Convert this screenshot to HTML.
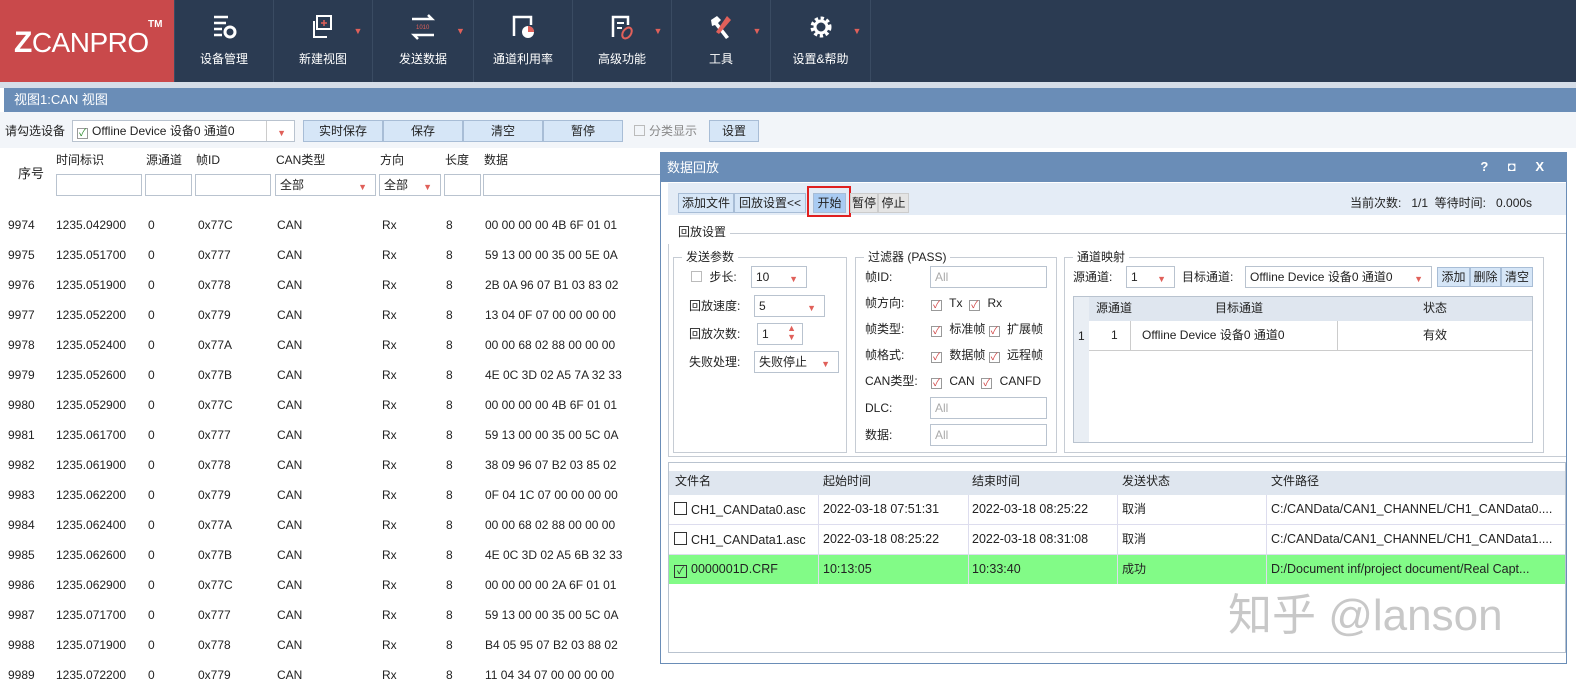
<!DOCTYPE html><html><head><meta charset="utf-8"><style>
*{box-sizing:border-box;margin:0;padding:0}
body{width:1576px;height:684px;overflow:hidden;background:#fff;font-family:"Liberation Sans","Noto Sans CJK SC",sans-serif;font-size:12px;line-height:15px;color:#222;position:relative}
.a{position:absolute;white-space:nowrap}
.nb{position:absolute;top:0;height:82px;border-left:1px solid #3a4b62;text-align:center;color:#fff}
.nb span{position:absolute;left:0;right:0;top:52px}
.ic{position:absolute;top:14px;left:50%;margin-left:-14px;width:28px;height:26px}
.tri{color:#e0605a;font-size:9px}
.inp{position:absolute;background:#fff;border:1px solid #b9c3cf;height:22px;padding:3px 4px;line-height:15px;white-space:nowrap}
.btn{position:absolute;background:#d6e6f7;border:1px solid #a8bdd6;text-align:center;height:22px;line-height:20px}
.row{position:absolute;left:0;width:660px;height:30px}
.row div{position:absolute;top:8px}
.cb{display:inline-block;width:11px;height:11px;border:1px solid #999;vertical-align:-1px;margin-right:4px;font-size:10px;line-height:9px;color:#d04040;text-align:center}
.grp{position:absolute;border:1px solid #c6ccd4}
.gt{position:absolute;background:#fff;padding:0 4px;top:-8px;left:8px}
</style></head><body>
<div class="a" style="left:0;top:0;width:174px;height:82px;background:#c9494b"></div>
<div class="a" style="left:14px;top:26px;color:#fff;font-size:28px;line-height:34px;letter-spacing:-0.5px"><b style="font-size:30px">Z</b>CANPRO</div>
<div class="a" style="left:148px;top:17px;color:#fff;font-size:10px;font-weight:bold">TM</div>
<div class="a" style="left:174px;top:0;width:1402px;height:82px;background:#2b3b52"></div>
<div class="nb" style="left:174px;width:99px"><svg class="ic" viewBox="0 0 28 26"><g stroke="#fff" stroke-width="2.5"><line x1="4" y1="3" x2="18" y2="3"/><line x1="4" y1="9" x2="16" y2="9"/><line x1="4" y1="15" x2="12" y2="15"/><line x1="4" y1="21" x2="12" y2="21"/></g><circle cx="20" cy="18" r="5" fill="none" stroke="#fff" stroke-width="3"/></svg><span>设备管理</span></div>
<div class="nb" style="left:273px;width:99px"><svg class="ic" viewBox="0 0 28 26"><rect x="8" y="2" width="14" height="13" fill="none" stroke="#fff" stroke-width="2"/><path d="M5 7v16h13" fill="none" stroke="#fff" stroke-width="2"/><path d="M15 6v6M12 9h6" stroke="#e0605a" stroke-width="1.5"/></svg><span class="tri" style="position:absolute;left:70px;top:24px">▼</span><span>新建视图</span></div>
<div class="nb" style="left:372px;width:101px"><svg class="ic" viewBox="0 0 28 26"><path d="M3 5h20l-4-4M25 21H5l4 4" fill="none" stroke="#fff" stroke-width="2.5"/><text x="7" y="15" font-size="6" fill="#e0605a">1010</text></svg><span class="tri" style="position:absolute;left:75px;top:24px">▼</span><span>发送数据</span></div>
<div class="nb" style="left:473px;width:99px"><svg class="ic" viewBox="0 0 28 26"><path d="M5 22V3h17v8" fill="none" stroke="#fff" stroke-width="2.5"/><circle cx="19" cy="18" r="6" fill="#fff"/><path d="M19 18V12a6 6 0 0 1 6 6z" fill="#e0605a"/></svg><span>通道利用率</span></div>
<div class="nb" style="left:572px;width:99px"><svg class="ic" viewBox="0 0 28 26"><path d="M5 23V3h15v8" fill="none" stroke="#fff" stroke-width="2.5"/><path d="M9 9h7M9 14h5" stroke="#fff" stroke-width="2"/><ellipse cx="19" cy="19" rx="4" ry="6" fill="none" stroke="#e0605a" stroke-width="2" transform="rotate(35 19 19)"/></svg><span class="tri" style="position:absolute;left:72px;top:24px">▼</span><span>高级功能</span></div>
<div class="nb" style="left:671px;width:99px"><svg class="ic" viewBox="0 0 28 26"><path d="M4 6l6-4 4 4-3 3 11 14-3 2L8 11 5 12z" fill="#fff"/><path d="M20 2l4 4-12 14-3-2z" fill="#e0605a"/></svg><span class="tri" style="position:absolute;left:72px;top:24px">▼</span><span>工具</span></div>
<div class="nb" style="left:770px;width:101px;border-right:1px solid #3a4b62"><svg class="ic" viewBox="0 0 28 26"><circle cx="14" cy="13" r="8" fill="none" stroke="#fff" stroke-width="5" stroke-dasharray="3 2.3"/><circle cx="14" cy="13" r="6" fill="none" stroke="#fff" stroke-width="3"/></svg><span class="tri" style="position:absolute;left:73px;top:24px">▼</span><span>设置&amp;帮助</span></div>
<div class="a" style="left:0;top:82px;width:1576px;height:6px;background:#d5dde8"></div>
<div class="a" style="left:4px;top:88px;width:1572px;height:24px;background:#6a8db7;color:#fff;font-size:13px;padding:4px 10px">视图1:CAN 视图</div>
<div class="a" style="left:0;top:112px;width:1576px;height:36px;background:#f2f5f9"></div>
<div class="a" style="left:5px;top:124px">请勾选设备</div>
<div class="inp" style="left:72px;top:120px;width:223px;height:22px"><span class="cb" style="color:#2a8a2a">✓</span>Offline Device 设备0 通道0<span class="tri" style="position:absolute;right:8px;top:5px">▼</span></div>
<div class="a" style="left:266px;top:121px;width:1px;height:20px;background:#ccc"></div>
<div class="btn" style="left:303px;top:120px;width:80px">实时保存</div>
<div class="btn" style="left:383px;top:120px;width:80px">保存</div>
<div class="btn" style="left:463px;top:120px;width:80px">清空</div>
<div class="btn" style="left:543px;top:120px;width:80px">暂停</div>
<div class="a" style="left:634px;top:124px;color:#888"><span class="cb" style="border-color:#bbb"></span>分类显示</div>
<div class="btn" style="left:709px;top:120px;width:50px">设置</div>
<div class="a" style="left:18px;top:166px;font-size:13px">序号</div>
<div class="a" style="left:56px;top:153px">时间标识</div>
<div class="a" style="left:146px;top:153px">源通道</div>
<div class="a" style="left:196px;top:153px">帧ID</div>
<div class="a" style="left:276px;top:153px">CAN类型</div>
<div class="a" style="left:380px;top:153px">方向</div>
<div class="a" style="left:445px;top:153px">长度</div>
<div class="a" style="left:484px;top:153px">数据</div>
<div class="inp" style="left:56px;top:174px;width:86px"></div>
<div class="inp" style="left:145px;top:174px;width:47px"></div>
<div class="inp" style="left:195px;top:174px;width:76px"></div>
<div class="inp" style="left:275px;top:174px;width:101px">全部<span class="tri" style="position:absolute;right:8px;top:5px">▼</span></div>
<div class="inp" style="left:379px;top:174px;width:62px">全部<span class="tri" style="position:absolute;right:8px;top:5px">▼</span></div>
<div class="inp" style="left:444px;top:174px;width:37px"></div>
<div class="inp" style="left:483px;top:174px;width:180px"></div>
<div style="position:absolute;left:0;top:0;font-size:12px">
<div class="row" style="top:210px"><div style="left:8px">9974</div><div style="left:56px">1235.042900</div><div style="left:148px">0</div><div style="left:198px">0x77C</div><div style="left:277px">CAN</div><div style="left:382px">Rx</div><div style="left:446px">8</div><div style="left:485px">00 00 00 00 4B 6F 01 01</div></div>
<div class="row" style="top:240px"><div style="left:8px">9975</div><div style="left:56px">1235.051700</div><div style="left:148px">0</div><div style="left:198px">0x777</div><div style="left:277px">CAN</div><div style="left:382px">Rx</div><div style="left:446px">8</div><div style="left:485px">59 13 00 00 35 00 5E 0A</div></div>
<div class="row" style="top:270px"><div style="left:8px">9976</div><div style="left:56px">1235.051900</div><div style="left:148px">0</div><div style="left:198px">0x778</div><div style="left:277px">CAN</div><div style="left:382px">Rx</div><div style="left:446px">8</div><div style="left:485px">2B 0A 96 07 B1 03 83 02</div></div>
<div class="row" style="top:300px"><div style="left:8px">9977</div><div style="left:56px">1235.052200</div><div style="left:148px">0</div><div style="left:198px">0x779</div><div style="left:277px">CAN</div><div style="left:382px">Rx</div><div style="left:446px">8</div><div style="left:485px">13 04 0F 07 00 00 00 00</div></div>
<div class="row" style="top:330px"><div style="left:8px">9978</div><div style="left:56px">1235.052400</div><div style="left:148px">0</div><div style="left:198px">0x77A</div><div style="left:277px">CAN</div><div style="left:382px">Rx</div><div style="left:446px">8</div><div style="left:485px">00 00 68 02 88 00 00 00</div></div>
<div class="row" style="top:360px"><div style="left:8px">9979</div><div style="left:56px">1235.052600</div><div style="left:148px">0</div><div style="left:198px">0x77B</div><div style="left:277px">CAN</div><div style="left:382px">Rx</div><div style="left:446px">8</div><div style="left:485px">4E 0C 3D 02 A5 7A 32 33</div></div>
<div class="row" style="top:390px"><div style="left:8px">9980</div><div style="left:56px">1235.052900</div><div style="left:148px">0</div><div style="left:198px">0x77C</div><div style="left:277px">CAN</div><div style="left:382px">Rx</div><div style="left:446px">8</div><div style="left:485px">00 00 00 00 4B 6F 01 01</div></div>
<div class="row" style="top:420px"><div style="left:8px">9981</div><div style="left:56px">1235.061700</div><div style="left:148px">0</div><div style="left:198px">0x777</div><div style="left:277px">CAN</div><div style="left:382px">Rx</div><div style="left:446px">8</div><div style="left:485px">59 13 00 00 35 00 5C 0A</div></div>
<div class="row" style="top:450px"><div style="left:8px">9982</div><div style="left:56px">1235.061900</div><div style="left:148px">0</div><div style="left:198px">0x778</div><div style="left:277px">CAN</div><div style="left:382px">Rx</div><div style="left:446px">8</div><div style="left:485px">38 09 96 07 B2 03 85 02</div></div>
<div class="row" style="top:480px"><div style="left:8px">9983</div><div style="left:56px">1235.062200</div><div style="left:148px">0</div><div style="left:198px">0x779</div><div style="left:277px">CAN</div><div style="left:382px">Rx</div><div style="left:446px">8</div><div style="left:485px">0F 04 1C 07 00 00 00 00</div></div>
<div class="row" style="top:510px"><div style="left:8px">9984</div><div style="left:56px">1235.062400</div><div style="left:148px">0</div><div style="left:198px">0x77A</div><div style="left:277px">CAN</div><div style="left:382px">Rx</div><div style="left:446px">8</div><div style="left:485px">00 00 68 02 88 00 00 00</div></div>
<div class="row" style="top:540px"><div style="left:8px">9985</div><div style="left:56px">1235.062600</div><div style="left:148px">0</div><div style="left:198px">0x77B</div><div style="left:277px">CAN</div><div style="left:382px">Rx</div><div style="left:446px">8</div><div style="left:485px">4E 0C 3D 02 A5 6B 32 33</div></div>
<div class="row" style="top:570px"><div style="left:8px">9986</div><div style="left:56px">1235.062900</div><div style="left:148px">0</div><div style="left:198px">0x77C</div><div style="left:277px">CAN</div><div style="left:382px">Rx</div><div style="left:446px">8</div><div style="left:485px">00 00 00 00 2A 6F 01 01</div></div>
<div class="row" style="top:600px"><div style="left:8px">9987</div><div style="left:56px">1235.071700</div><div style="left:148px">0</div><div style="left:198px">0x777</div><div style="left:277px">CAN</div><div style="left:382px">Rx</div><div style="left:446px">8</div><div style="left:485px">59 13 00 00 35 00 5C 0A</div></div>
<div class="row" style="top:630px"><div style="left:8px">9988</div><div style="left:56px">1235.071900</div><div style="left:148px">0</div><div style="left:198px">0x778</div><div style="left:277px">CAN</div><div style="left:382px">Rx</div><div style="left:446px">8</div><div style="left:485px">B4 05 95 07 B2 03 88 02</div></div>
<div class="row" style="top:660px"><div style="left:8px">9989</div><div style="left:56px">1235.072200</div><div style="left:148px">0</div><div style="left:198px">0x779</div><div style="left:277px">CAN</div><div style="left:382px">Rx</div><div style="left:446px">8</div><div style="left:485px">11 04 34 07 00 00 00 00</div></div>
</div>
<div class="a" style="left:660px;top:152px;width:907px;height:512px;background:#fff;border:1px solid #6a8db7"></div>
<div class="a" style="left:661px;top:153px;width:905px;height:29px;background:#6a8db7;color:#fff;font-size:13px;padding:7px 6px">数据回放<span style="position:absolute;right:14px;top:6px;font-weight:bold;letter-spacing:8px">? ◘ X</span></div>
<div class="a" style="left:668px;top:183px;width:898px;height:32px;background:#e4ecf6"></div>
<div class="btn" style="left:678px;top:193px;width:56px;height:20px;line-height:18px">添加文件</div>
<div class="btn" style="left:734px;top:193px;width:72px;height:20px;line-height:18px">回放设置&lt;&lt;</div>
<div class="btn" style="left:813px;top:193px;width:33px;height:20px;line-height:18px;background:#a9cbf2">开始</div>
<div class="a" style="left:807px;top:186px;width:44px;height:31px;border:2px solid #e02020"></div>
<div class="btn" style="left:850px;top:193px;width:28px;height:20px;line-height:18px;background:#e4e4e4;border-color:#ccc">暂停</div>
<div class="btn" style="left:878px;top:193px;width:31px;height:20px;line-height:18px;background:#e4e4e4;border-color:#ccc">停止</div>
<div class="a" style="left:1350px;top:196px">当前次数:&nbsp;&nbsp;&nbsp;1/1&nbsp;&nbsp;等待时间:&nbsp;&nbsp;&nbsp;0.000s</div>
<div class="a" style="left:678px;top:225px">回放设置</div>
<div class="a" style="left:730px;top:233px;width:836px;height:1px;background:#c6ccd4"></div>
<div class="a" style="left:668px;top:244px;width:1px;height:213px;background:#c6ccd4"></div>
<div class="a" style="left:668px;top:456px;width:898px;height:1px;background:#c6ccd4"></div>
<div class="grp" style="left:673px;top:257px;width:174px;height:196px"><div class="gt">发送参数</div></div>
<div class="a" style="left:691px;top:270px"><span class="cb" style="border-color:#bbb"></span> 步长:</div>
<div class="inp" style="left:751px;top:266px;width:56px">10<span class="tri" style="position:absolute;right:8px;top:5px">▼</span></div>
<div class="a" style="left:689px;top:299px">回放速度:</div>
<div class="inp" style="left:754px;top:295px;width:71px">5<span class="tri" style="position:absolute;right:8px;top:5px">▼</span></div>
<div class="a" style="left:689px;top:327px">回放次数:</div>
<div class="inp" style="left:757px;top:323px;width:46px">1<span class="tri" style="position:absolute;right:6px;top:0px;line-height:9px">▲<br>▼</span></div>
<div class="a" style="left:689px;top:355px">失败处理:</div>
<div class="inp" style="left:754px;top:351px;width:85px">失败停止<span class="tri" style="position:absolute;right:8px;top:5px">▼</span></div>
<div class="grp" style="left:855px;top:257px;width:202px;height:196px"><div class="gt">过滤器 (PASS)</div></div>
<div class="a" style="left:865px;top:270px">帧ID:</div><div class="inp" style="left:930px;top:266px;width:117px;color:#aaa">All</div>
<div class="a" style="left:865px;top:296px">帧方向:</div><div class="a" style="left:931px;top:296px"><span class="cb">✓</span> Tx&nbsp;&nbsp;<span class="cb">✓</span> Rx</div>
<div class="a" style="left:865px;top:322px">帧类型:</div><div class="a" style="left:931px;top:322px"><span class="cb">✓</span> 标准帧 <span class="cb">✓</span> 扩展帧</div>
<div class="a" style="left:865px;top:348px">帧格式:</div><div class="a" style="left:931px;top:348px"><span class="cb">✓</span> 数据帧 <span class="cb">✓</span> 远程帧</div>
<div class="a" style="left:865px;top:374px">CAN类型:</div><div class="a" style="left:931px;top:374px"><span class="cb">✓</span> CAN&nbsp;&nbsp;<span class="cb">✓</span> CANFD</div>
<div class="a" style="left:865px;top:401px">DLC:</div><div class="inp" style="left:930px;top:397px;width:117px;color:#aaa">All</div>
<div class="a" style="left:865px;top:428px">数据:</div><div class="inp" style="left:930px;top:424px;width:117px;color:#aaa">All</div>
<div class="grp" style="left:1064px;top:257px;width:480px;height:196px"><div class="gt">通道映射</div></div>
<div class="a" style="left:1073px;top:270px">源通道:</div>
<div class="inp" style="left:1126px;top:266px;width:49px">1<span class="tri" style="position:absolute;right:8px;top:5px">▼</span></div>
<div class="a" style="left:1182px;top:270px">目标通道:</div>
<div class="inp" style="left:1245px;top:266px;width:187px">Offline Device 设备0 通道0<span class="tri" style="position:absolute;right:8px;top:5px">▼</span></div>
<div class="btn" style="left:1437px;top:267px;width:33px;height:20px;line-height:18px">添加</div>
<div class="btn" style="left:1470px;top:267px;width:31px;height:20px;line-height:18px">删除</div>
<div class="btn" style="left:1501px;top:267px;width:32px;height:20px;line-height:18px">清空</div>
<div class="a" style="left:1073px;top:296px;width:460px;height:147px;border:1px solid #b9c3cf;background:#fff"></div>
<div class="a" style="left:1074px;top:297px;width:458px;height:24px;background:#dfe6ef"></div>
<div class="a" style="left:1074px;top:297px;width:15px;height:145px;background:#e9eef4"></div>
<div class="a" style="left:1096px;top:301px">源通道</div><div class="a" style="left:1215px;top:301px">目标通道</div><div class="a" style="left:1423px;top:301px">状态</div>
<div class="a" style="left:1089px;top:321px;width:443px;height:30px;border-bottom:1px solid #ccc"></div>
<div class="a" style="left:1130px;top:321px;width:1px;height:30px;background:#ccc"></div>
<div class="a" style="left:1337px;top:321px;width:1px;height:30px;background:#ccc"></div>
<div class="a" style="left:1078px;top:329px">1</div><div class="a" style="left:1111px;top:328px">1</div><div class="a" style="left:1142px;top:328px">Offline Device 设备0 通道0</div><div class="a" style="left:1423px;top:328px">有效</div>
<div class="a" style="left:668px;top:462px;width:898px;height:191px;border:1px solid #b9c3cf"></div>
<div class="a" style="left:669px;top:471px;width:896px;height:24px;background:#dfe6ef"></div>
<div class="a" style="left:675px;top:474px">文件名</div><div class="a" style="left:823px;top:474px">起始时间</div><div class="a" style="left:972px;top:474px">结束时间</div><div class="a" style="left:1122px;top:474px">发送状态</div><div class="a" style="left:1271px;top:474px">文件路径</div>
<div class="a" style="left:669px;top:554px;width:896px;height:30px;background:#82fb87"></div>
<div class="a" style="left:669px;top:524px;width:896px;height:1px;background:#dde"></div>
<div class="a" style="left:669px;top:554px;width:896px;height:1px;background:#dde"></div>
<div class="a" style="left:818px;top:495px;width:1px;height:89px;background:#dde"></div>
<div class="a" style="left:968px;top:495px;width:1px;height:89px;background:#dde"></div>
<div class="a" style="left:1117px;top:495px;width:1px;height:89px;background:#dde"></div>
<div class="a" style="left:1266px;top:495px;width:1px;height:89px;background:#dde"></div>
<div class="a" style="left:674px;top:502px;font-size:12.5px"><span class="cb" style="width:13px;height:13px;border-color:#333"></span>CH1_CANData0.asc</div>
<div class="a" style="left:823px;top:502px;font-size:12.5px">2022-03-18 07:51:31</div><div class="a" style="left:972px;top:502px;font-size:12.5px">2022-03-18 08:25:22</div><div class="a" style="left:1122px;top:502px">取消</div><div class="a" style="left:1271px;top:502px;font-size:12.5px">C:/CANData/CAN1_CHANNEL/CH1_CANData0....</div>
<div class="a" style="left:674px;top:532px;font-size:12.5px"><span class="cb" style="width:13px;height:13px;border-color:#333"></span>CH1_CANData1.asc</div>
<div class="a" style="left:823px;top:532px;font-size:12.5px">2022-03-18 08:25:22</div><div class="a" style="left:972px;top:532px;font-size:12.5px">2022-03-18 08:31:08</div><div class="a" style="left:1122px;top:532px">取消</div><div class="a" style="left:1271px;top:532px;font-size:12.5px">C:/CANData/CAN1_CHANNEL/CH1_CANData1....</div>
<div class="a" style="left:674px;top:562px;font-size:12.5px"><span class="cb" style="width:13px;height:13px;border-color:#333;color:#222;line-height:11px">✓</span>0000001D.CRF</div>
<div class="a" style="left:823px;top:562px;font-size:12.5px">10:13:05</div><div class="a" style="left:972px;top:562px;font-size:12.5px">10:33:40</div><div class="a" style="left:1122px;top:562px">成功</div><div class="a" style="left:1271px;top:562px;font-size:12.5px">D:/Document inf/project document/Real Capt...</div>
<div class="a" style="left:1228px;top:588px;font-size:44px;line-height:56px;color:#c8c8c8">知乎 @lanson</div>
</body></html>
